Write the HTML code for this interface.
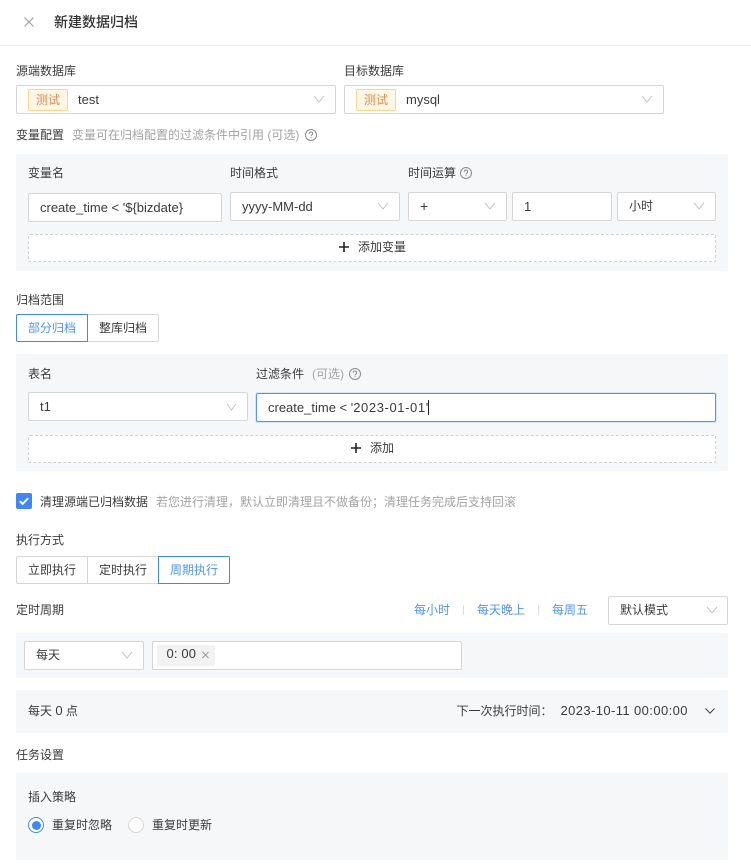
<!DOCTYPE html>
<html lang="zh"><head><meta charset="utf-8"><title>新建数据归档</title>
<style>
html,body{margin:0;padding:0;background:#fff}
#r{position:relative;width:751px;height:868px;overflow:hidden;font:12px/18px "Liberation Sans","Noto Sans CJK SC",sans-serif;color:#3a3a3a;filter:blur(.25px)}
#r div,#r span.a,#r svg{position:absolute;box-sizing:border-box}
.t{white-space:nowrap;height:18px}
.g{color:#a3a3a3}
.b{color:#4f94f7}
.p{background:#f6f7f9}
.f{background:#fff;border:1px solid #d5d5d5;border-radius:2px;white-space:nowrap;line-height:27px;padding-left:11px}
.d{background:#fff;border:1px dashed #d0d0d0;border-radius:2px}
.tab{background:#fff;border:1px solid #d5d5d5;text-align:center;line-height:26px;white-space:nowrap}
.on{border-color:#3f87f5;color:#4f94f7;z-index:1}
.l{font-size:13px}
.n{letter-spacing:.6px}
</style></head><body><div id="r">
<svg style="left:24px;top:17px" width="10" height="10" viewBox="0 0 10 10"><path d="M.5.5l9 9M9.500.5l-9 9" stroke="#999" fill="none"/></svg>
<div class="t" style="left:54px;top:13px;font-size:14px;font-weight:500;color:#333">新建数据归档</div>
<div style="left:0;top:45px;width:751px;height:1px;background:#ebebeb"></div>

<div class="t" style="left:16px;top:62px">源端数据库</div>
<div class="t" style="left:344px;top:62px">目标数据库</div>
<div class="f" style="left:16px;top:85px;width:320px;height:29px"></div>
<div class="f" style="left:344px;top:85px;width:320px;height:29px"></div>
<div style="left:28px;top:89px;width:40px;height:22px;background:#fff6e6;border:1px solid #fbd48f;border-radius:2px;color:#d98a4b;text-align:center;line-height:20px">测试</div>
<div style="left:356px;top:89px;width:40px;height:22px;background:#fff6e6;border:1px solid #fbd48f;border-radius:2px;color:#d98a4b;text-align:center;line-height:20px">测试</div>
<div class="t l" style="left:78px;top:91px">test</div>
<div class="t l" style="left:406px;top:91px">mysql</div>

<div class="t" style="left:16px;top:126px">变量配置</div>
<div class="t g" style="left:72px;top:126px">变量可在归档配置的过滤条件中引用 (可选)</div>

<div class="p" style="left:16px;top:154px;width:712px;height:117px"></div>
<div class="t" style="left:28px;top:164px">变量名</div>
<div class="t" style="left:230px;top:164px">时间格式</div>
<div class="t" style="left:408px;top:164px">时间运算</div>
<div class="f l" style="left:28px;top:193px;width:194px;height:29px">create_time &lt; '${bizdate}</div>
<div class="f l" style="left:230px;top:192px;width:170px;height:29px">yyyy-MM-dd</div>
<div class="f" style="left:408px;top:192px;width:99px;height:29px;font-size:14px">+</div>
<div class="f l" style="left:512px;top:192px;width:100px;height:29px">1</div>
<div class="f" style="left:617px;top:192px;width:99px;height:29px">小时</div>
<div class="d" style="left:28px;top:234px;width:688px;height:28px"></div>
<svg style="left:339px;top:242px" width="10" height="10" viewBox="0 0 10 10"><path d="M0 5h10M5 0v10" stroke="#222" stroke-width="1.600" fill="none"/></svg>
<div class="t" style="left:358px;top:238px">添加变量</div>

<div class="t" style="left:16px;top:291px">归档范围</div>
<div class="tab" style="left:87px;top:314px;width:72px;height:28px;border-radius:0 2px 2px 0">整库归档</div>
<div class="tab on" style="left:16px;top:314px;width:72px;height:28px;border-radius:2px 0 0 2px">部分归档</div>

<div class="p" style="left:16px;top:354px;width:712px;height:117px"></div>
<div class="t" style="left:28px;top:365px">表名</div>
<div class="t" style="left:256px;top:365px">过滤条件</div>
<div class="t g" style="left:312px;top:365px">(可选)</div>
<div class="f l" style="left:28px;top:392px;width:220px;height:29px">t1</div>
<div class="f l" style="left:256px;top:393px;width:460px;height:29px;border-color:#4f94f7;box-shadow:0 0 0 1px #d6e6fd">create_time &lt; '<span class="n">2023-01-01</span>'<span style="border-left:1px solid #222"></span></div>
<div class="d" style="left:28px;top:435px;width:688px;height:28px"></div>
<svg style="left:351px;top:443px" width="10" height="10" viewBox="0 0 10 10"><path d="M0 5h10M5 0v10" stroke="#222" stroke-width="1.600" fill="none"/></svg>
<div class="t" style="left:370px;top:439px">添加</div>

<div style="left:16px;top:493px;width:16px;height:16px;background:#3f87f5;border-radius:2px"></div>
<svg style="left:16px;top:493px" width="16" height="16" viewBox="0 0 16 16"><path d="M3.800 8.200l2.900 2.700 5.400-5.600" stroke="#fff" stroke-width="2" fill="none"/></svg>
<div class="t" style="left:40px;top:493px">清理源端已归档数据</div>
<div class="t g" style="left:156px;top:493px">若您进行清理，默认立即清理且不做备份；清理任务完成后支持回滚</div>

<div class="t" style="left:16px;top:531px">执行方式</div>
<div class="tab" style="left:16px;top:556px;width:72px;height:28px;border-radius:2px 0 0 2px">立即执行</div>
<div class="tab" style="left:87px;top:556px;width:72px;height:28px">定时执行</div>
<div class="tab on" style="left:158px;top:556px;width:72px;height:28px;border-radius:0 2px 2px 0">周期执行</div>

<div class="t" style="left:16px;top:601px">定时周期</div>
<div class="t b" style="left:414px;top:601px">每小时</div>
<div style="left:463px;top:605px;width:1px;height:10px;background:#dcdcdc"></div>
<div class="t b" style="left:477px;top:601px">每天晚上</div>
<div style="left:538px;top:605px;width:1px;height:10px;background:#dcdcdc"></div>
<div class="t b" style="left:552px;top:601px">每周五</div>
<div class="f" style="left:608px;top:596px;width:120px;height:29px">默认模式</div>

<div class="p" style="left:16px;top:633px;width:712px;height:45px"></div>
<div class="f" style="left:24px;top:641px;width:120px;height:29px">每天</div>
<div class="f" style="left:152px;top:641px;width:310px;height:29px"></div>
<div style="left:157px;top:645px;width:58px;height:21px;background:#f2f2f2;border-radius:2px"></div>
<div class="t l" style="left:166.500px;top:645px;letter-spacing:.15px">0: 00</div>
<svg style="left:202px;top:651px" width="7" height="8" viewBox="0 0 7 8"><path d="M.5 1l6 6M6.500 1l-6 6" stroke="#999" fill="none"/></svg>

<div class="p" style="left:16px;top:690px;width:712px;height:43px"></div>
<div class="t" style="left:28px;top:702px">每天 <span class="l">0</span> 点</div>
<div class="t" style="left:456.500px;top:702px">下一次执行时间：</div>
<div class="t l" style="left:560.500px;top:702px;letter-spacing:.4px">2023-10-11 00:00:00</div>
<svg style="left:705px;top:708px" width="10" height="6" viewBox="0 0 10 6"><path d="M.5.500L5 5.200 9.500.5" stroke="#3a3a3a" fill="none"/></svg>

<div class="t" style="left:16px;top:746px">任务设置</div>
<div class="p" style="left:16px;top:773px;width:712px;height:87px"></div>
<div class="t" style="left:28px;top:788px">插入策略</div>
<div style="left:28px;top:817px;width:16px;height:16px;border:1px solid #3f87f5;border-radius:50%;background:#fff"></div>
<div style="left:31.500px;top:820.500px;width:9px;height:9px;border-radius:50%;background:#3f87f5"></div>
<div class="t" style="left:52px;top:816px">重复时忽略</div>
<div style="left:128px;top:817px;width:16px;height:16px;border:1px solid #d5d5d5;border-radius:50%;background:#fff"></div>
<div class="t" style="left:152px;top:816px">重复时更新</div>

<svg style="left:0;top:0" width="751" height="868" viewBox="0 0 751 868" fill="none">
<g stroke="#c4c4c4"><path d="M314 96l5 6 5-6M642 96l5 6 5-6M378 203l5 6 5-6M485 203l5 6 5-6M694 203l5 6 5-6M227 404l4.500 6 4.500-6M707 607l5 6 5-6M122 652l5 6 5-6"/></g>
<g stroke="#8c8c8c"><circle cx="311" cy="135" r="5.500"/><circle cx="466" cy="173" r="5.500"/><circle cx="355" cy="374" r="5.500"/><path d="M309.300 133.700c0-2.200 3.400-2.200 3.400 0 0 1.300-1.700 1.300-1.700 2.700M464.300 171.700c0-2.200 3.400-2.200 3.400 0 0 1.300-1.700 1.300-1.700 2.700M353.300 372.700c0-2.200 3.400-2.200 3.400 0 0 1.300-1.700 1.300-1.700 2.700"/><path d="M311 137.300v1M466 175.300v1M355 376.300v1"/></g>
</svg>
</div></body></html>
